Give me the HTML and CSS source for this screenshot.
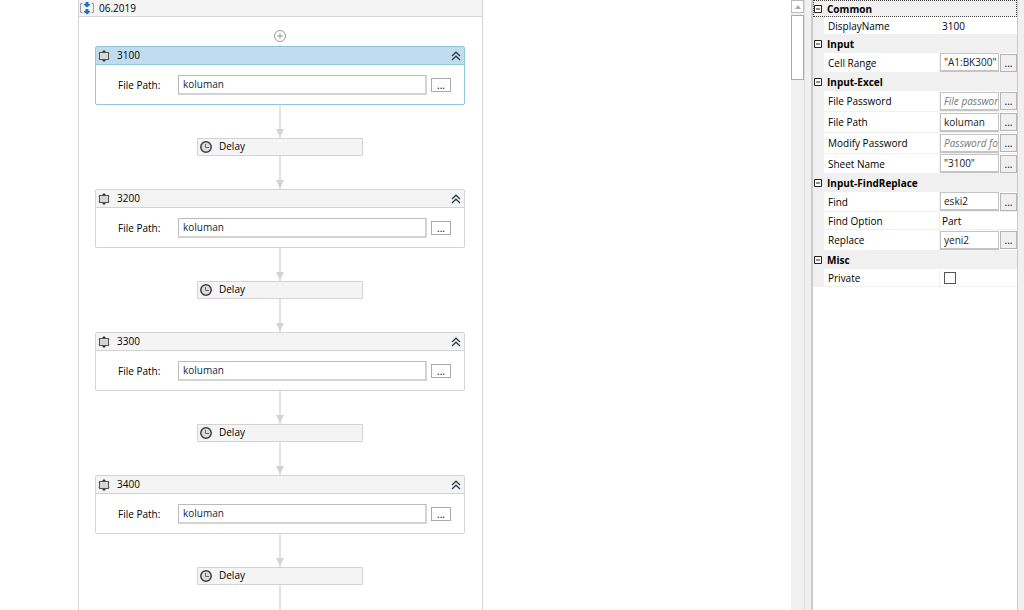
FILE: index.html
```
<!DOCTYPE html>
<html lang="en">
	<head>
		<meta charset="utf-8">
		<title>06.2019</title>
		<link rel="stylesheet" href="styles.css">
	</head>
	<body>
		<svg class="defs" aria-hidden="true">
			<symbol id="i-range" viewBox="0 0 12 12">
				<path d="M4 2 6 0l2 2zM4 10l2 2 2-2z" fill="#333"/>
				<rect x="1.500" y="2.500" width="9" height="7" fill="#d5d5d5" stroke="#555"/>
				<path d="M0 3.500h1M11 3.500h1M0 8.500h1M11 8.500h1" stroke="#bbb"/>
			</symbol>
			<symbol id="i-collapse" viewBox="0 0 10 10">
				<path d="M1 5 5 1.2 9 5M1 9 5 5.2 9 9" fill="none" stroke="#2b3a48" stroke-width="1.2"/>
			</symbol>
			<symbol id="i-clock" viewBox="0 0 12 12">
				<circle cx="6" cy="6" r="5.2" fill="#ddd" stroke="#3c3c3c" stroke-width="1.500"/>
				<path d="M5.500 3v3.500H9" fill="none" stroke="#666"/>
			</symbol>
			<symbol id="i-arrow" viewBox="0 0 8 8">
				<path d="M0 0h8L4 8z" fill="#d3d3d3"/>
			</symbol>
			<symbol id="i-minus" viewBox="0 0 8 8">
				<path d="M.5.5h7v7h-7z" fill="#fff" stroke="#222"/>
				<path d="M2 4h4" stroke="#222"/>
			</symbol>
		</svg>

		<main class="designer">
			<section class="sequence">
				<header class="sequence-head">
					<svg class="seq-icon" viewBox="0 0 14 14">
						<path d="M2.500 2.500h-2v9h2M11.500 2.500h2v9h-2" fill="none" stroke="#999"/>
						<path d="M5.500 1h3v2H10v1L7 6.500 4 4V3h1.500zM5.500 8h3v2H10v1l-3 2.500L4 11v-1h1.500z" fill="#1673c8"/>
					</svg>
					<span>06.2019</span>
				</header>
				<div class="flow">
					<button class="add" aria-label="Add activity">
						<svg viewBox="0 0 14 14"><circle cx="7" cy="7" r="5.500" fill="#fff" stroke="#999"/><path d="M4 7h6M7 4v6" stroke="#999"/></svg>
					</button>

					<article class="activity selected">
						<header class="activity-head">
							<svg class="icon"><use href="#i-range"/></svg>
							<span>3100</span>
							<button class="collapse" aria-label="Collapse"><svg><use href="#i-collapse"/></svg></button>
						</header>
						<div class="activity-body">
							<label for="path1">File Path:</label>
							<input id="path1" type="text" value="koluman">
							<button class="browse">...</button>
						</div>
					</article>
					<div class="connector"><svg><use href="#i-arrow"/></svg></div>
					<div class="delay"><svg class="icon"><use href="#i-clock"/></svg><span>Delay</span></div>
					<div class="connector"><svg><use href="#i-arrow"/></svg></div>

					<article class="activity">
						<header class="activity-head">
							<svg class="icon"><use href="#i-range"/></svg>
							<span>3200</span>
							<button class="collapse" aria-label="Collapse"><svg><use href="#i-collapse"/></svg></button>
						</header>
						<div class="activity-body">
							<label for="path2">File Path:</label>
							<input id="path2" type="text" value="koluman">
							<button class="browse">...</button>
						</div>
					</article>
					<div class="connector"><svg><use href="#i-arrow"/></svg></div>
					<div class="delay"><svg class="icon"><use href="#i-clock"/></svg><span>Delay</span></div>
					<div class="connector"><svg><use href="#i-arrow"/></svg></div>

					<article class="activity">
						<header class="activity-head">
							<svg class="icon"><use href="#i-range"/></svg>
							<span>3300</span>
							<button class="collapse" aria-label="Collapse"><svg><use href="#i-collapse"/></svg></button>
						</header>
						<div class="activity-body">
							<label for="path3">File Path:</label>
							<input id="path3" type="text" value="koluman">
							<button class="browse">...</button>
						</div>
					</article>
					<div class="connector"><svg><use href="#i-arrow"/></svg></div>
					<div class="delay"><svg class="icon"><use href="#i-clock"/></svg><span>Delay</span></div>
					<div class="connector"><svg><use href="#i-arrow"/></svg></div>

					<article class="activity">
						<header class="activity-head">
							<svg class="icon"><use href="#i-range"/></svg>
							<span>3400</span>
							<button class="collapse" aria-label="Collapse"><svg><use href="#i-collapse"/></svg></button>
						</header>
						<div class="activity-body">
							<label for="path4">File Path:</label>
							<input id="path4" type="text" value="koluman">
							<button class="browse">...</button>
						</div>
					</article>
					<div class="connector"><svg><use href="#i-arrow"/></svg></div>
					<div class="delay"><svg class="icon"><use href="#i-clock"/></svg><span>Delay</span></div>
					<div class="connector"></div>
				</div>
			</section>
		</main>

		<div class="scrollbar">
			<button class="scroll-up" aria-label="Scroll up"><svg viewBox="0 0 6 4"><path d="M0 4 3 0l3 4z" fill="#aaa"/></svg></button>
			<div class="thumb"></div>
		</div>

		<aside class="properties">
			<h2 class="group focused"><svg><use href="#i-minus"/></svg>Common</h2>
			<div class="prop">
				<span class="name">DisplayName</span>
				<span class="value">3100</span>
			</div>

			<h2 class="group"><svg><use href="#i-minus"/></svg>Input</h2>
			<div class="prop boxed">
				<label class="name" for="range">Cell Range</label>
				<div class="field"><input id="range" type="text" value='"A1:BK300"'><button>...</button></div>
			</div>

			<h2 class="group"><svg><use href="#i-minus"/></svg>Input-Excel</h2>
			<div class="prop tall">
				<label class="name" for="password">File Password</label>
				<div class="field"><input id="password" type="text" placeholder="File password"><button>...</button></div>
			</div>
			<div class="prop tall">
				<label class="name" for="filepath">File Path</label>
				<div class="field"><input id="filepath" type="text" value="koluman"><button>...</button></div>
			</div>
			<div class="prop tall">
				<label class="name" for="modify">Modify Password</label>
				<div class="field"><input id="modify" type="text" placeholder="Password for modifying"><button>...</button></div>
			</div>
			<div class="prop boxed">
				<label class="name" for="sheet">Sheet Name</label>
				<div class="field"><input id="sheet" type="text" value='"3100"'><button>...</button></div>
			</div>

			<h2 class="group"><svg><use href="#i-minus"/></svg>Input-FindReplace</h2>
			<div class="prop boxed">
				<label class="name" for="find">Find</label>
				<div class="field"><input id="find" type="text" value="eski2"><button>...</button></div>
			</div>
			<div class="prop">
				<span class="name">Find Option</span>
				<span class="value">Part</span>
			</div>
			<div class="prop tall">
				<label class="name" for="replace">Replace</label>
				<div class="field"><input id="replace" type="text" value="yeni2"><button>...</button></div>
			</div>

			<h2 class="group"><svg><use href="#i-minus"/></svg>Misc</h2>
			<div class="prop">
				<label class="name" for="private">Private</label>
				<span class="value"><input id="private" type="checkbox"></span>
			</div>
		</aside>
	</body>
</html>
```
FILE: styles.css
```
* {
	box-sizing: border-box;
}
body {
	margin: 0;
	height: 100vh;
	display: flex;
	overflow: hidden;
	background: #f0f0f0;
	color: #000;
	font: 10px/14px "Open Sans", "Noto Sans", sans-serif;
}
button,
input {
	margin: 0;
	padding: 0;
	font: inherit;
	color: inherit;
}
svg {
	display: block;
	flex: none;
}
.defs {
	position: absolute;
	width: 0;
	height: 0;
}

/* workflow canvas */
.designer {
	flex: 1;
	min-width: 0;
	padding-left: 78px;
	overflow: hidden;
	background: #fff;
}
.sequence {
	width: fit-content;
	min-height: 100%;
	border: solid #d3d3d3;
	border-width: 0 1px;
}
.sequence-head {
	height: 17px;
	padding: 0 1px 1px;
	display: flex;
	align-items: center;
	gap: 5px;
	background: #f4f4f4;
	border-bottom: 1px solid #d8d8d8;
}
.seq-icon {
	width: 14px;
	height: 14px;
}
.flow {
	padding: 12px 17px 0 16px;
	display: flex;
	flex-direction: column;
	align-items: center;
}
.add {
	margin-bottom: 3px;
	border: 0;
	background: none;
}
.add svg {
	width: 14px;
	height: 14px;
}
.activity {
	width: 370px;
	border: 1px solid #d3d3d3;
	border-radius: 2px;
	background: #fff;
}
.activity-head {
	height: 18px;
	padding: 0 3px 0 2px;
	display: flex;
	align-items: center;
	gap: 7px;
	background: #f4f4f4;
	border-bottom: 1px solid #d3d3d3;
}
.activity-head span,
.delay span {
	padding-bottom: 2px;
}
.icon {
	width: 12px;
	height: 12px;
}
.collapse {
	margin-left: auto;
	border: 0;
	background: none;
}
.collapse svg {
	width: 10px;
	height: 10px;
}
.selected {
	border-color: #92c3e2;
}
.selected .activity-head {
	background: #c1dcef;
	border-color: #92c3e2;
}
.activity-body {
	height: 39px;
	padding: 0 13px 0 22px;
	display: flex;
	align-items: center;
}
.activity-body label {
	width: 60px;
}
.activity-body input {
	flex: 1;
	min-width: 0;
	height: 20px;
	padding: 0 4px;
	border: 1px solid #bbb;
	border-right: 2px solid #d3d3d3;
	border-bottom: 2px solid #d3d3d3;
	color: #10263f;
}
.browse {
	width: 20px;
	height: 14px;
	margin-left: 4px;
	border: 1px solid #aaa;
	background: #fff;
	line-height: 12px;
}
.connector {
	width: 8px;
	height: 33px;
	display: flex;
	align-items: flex-end;
	background: linear-gradient(#e3e3e3, #e3e3e3) center / 2px 100% no-repeat;
}
.connector svg {
	width: 8px;
	height: 8px;
	margin-bottom: 1px;
}
.delay {
	width: 166px;
	height: 18px;
	padding: 0 2px;
	display: flex;
	align-items: center;
	gap: 7px;
	border: 1px solid #d3d3d3;
	border-radius: 1px;
	background: #f4f4f4;
}

/* canvas scrollbar */
.scrollbar {
	width: 14px;
	display: flex;
	flex-direction: column;
	gap: 2px;
	border-right: 1px solid #ddd;
}
.scroll-up {
	height: 13px;
	display: grid;
	place-items: center;
	border: 1px solid #bbb;
	background: #fff;
}
.scroll-up svg {
	width: 6px;
	height: 4px;
}
.thumb {
	height: 65px;
	border: 1px solid #aaa;
	background: #fff;
}

/* property grid */
.properties {
	width: 207px;
	margin: 0 6px;
	border: solid #ccc;
	border-width: 0 1px 0 2px;
	background: #fff;
}
.group {
	height: 18px;
	margin: 0;
	padding: 0 1px;
	display: flex;
	align-items: center;
	gap: 5px;
	background: #f0f0f0;
	font-size: 10px;
	font-weight: 700;
}
.group svg {
	width: 8px;
	height: 8px;
}
.focused {
	height: 17px;
	padding: 0;
	border: 1px dotted #444;
}
.prop {
	min-height: 18px;
	display: grid;
	grid-template-columns: 116px minmax(0, 1fr);
	align-items: stretch;
	border-left: 11px solid #f0f0f0;
	border-bottom: 1px solid #f0f0f0;
}
.boxed {
	min-height: 20px;
}
.tall {
	min-height: 21px;
}
.name {
	padding-left: 4px;
	display: flex;
	align-items: center;
	border-right: 1px solid #f0f0f0;
}
.value {
	padding-left: 2px;
	display: flex;
	align-items: center;
}
.field {
	display: flex;
	align-items: center;
	gap: 1px;
}
.field input {
	flex: 1;
	min-width: 0;
	height: 19px;
	padding: 0 0 0 3px;
	border: 1px solid #c4c4c4;
	border-bottom-width: 2px;
	color: #222;
}
.field input::placeholder {
	color: #777;
	font-style: italic;
}
.field button {
	width: 17px;
	height: 18px;
	border: 1px solid #b5b5b5;
	background: #f0f0f0;
}
.value input {
	appearance: none;
	width: 12px;
	height: 12px;
	margin-left: 2px;
	border: 1px solid #555;
	background: #fff;
}
```
